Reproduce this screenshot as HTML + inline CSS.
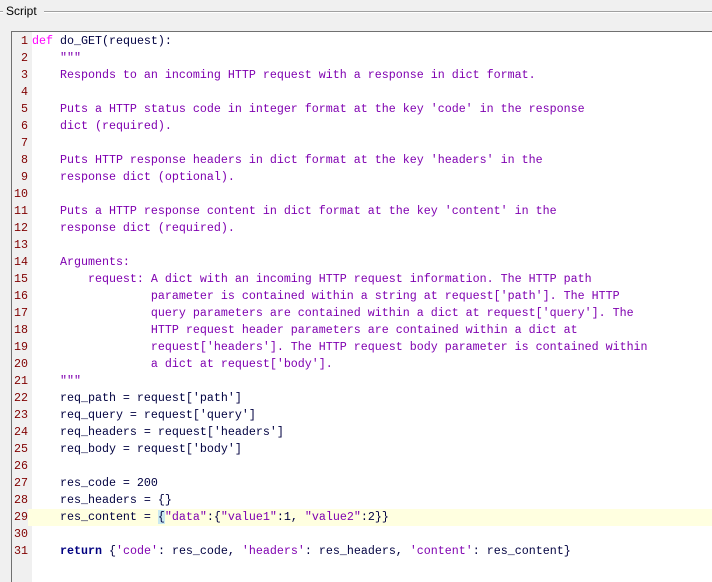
<!DOCTYPE html>
<html><head><style>
html,body{margin:0;width:712px;height:582px;overflow:hidden}
body{background:#f0f0f0;position:relative;font-family:"Liberation Sans",sans-serif}
.title{position:absolute;left:6px;top:4px;font-size:12px;color:#000}
.groove{position:absolute;left:44px;top:11px;width:668px;height:0;border-top:1px solid #a0a0a0;border-bottom:1px solid #fff}
.gl{position:absolute;left:0;top:11px;width:3px;border-top:1px solid #a0a0a0;border-bottom:1px solid #fff}
.ed{position:absolute;left:11px;top:31px;width:701px;height:551px;border-left:1px solid #707070;border-top:1px solid #707070;background:#fff;overflow:hidden}
.gut{position:absolute;left:0;top:0;width:20px;height:100%;background:#f0f0f0}
pre{margin:0;position:absolute;top:1px;left:0;font-family:"Liberation Mono",monospace;font-size:11.67px;line-height:17px;color:#000040}
.row{height:17px;white-space:pre;position:relative}
.n{display:inline-block;width:16px;text-align:right;color:#800000;margin-right:4px}
.d{color:#7f00b0}.k{color:#ff00ff}.r{color:#000080;font-weight:bold}.s{color:#7f00b0}
.hl{background:#ffffe0;width:701px}
.hl .n{background:#f0f0f0}
.br{background:#c8e8f0}
</style></head><body>
<div class="gl"></div>
<div class="title">Script</div>
<div class="groove"></div>
<div class="ed"><div class="gut"></div>
<pre><div class="row"><span class="n">1</span><span class="k">def</span> do_GET(request):</div><div class="row"><span class="n">2</span><span class="d">    """</span></div><div class="row"><span class="n">3</span><span class="d">    Responds to an incoming HTTP request with a response in dict format.</span></div><div class="row"><span class="n">4</span></div><div class="row"><span class="n">5</span><span class="d">    Puts a HTTP status code in integer format at the key 'code' in the response</span></div><div class="row"><span class="n">6</span><span class="d">    dict (required).</span></div><div class="row"><span class="n">7</span></div><div class="row"><span class="n">8</span><span class="d">    Puts HTTP response headers in dict format at the key 'headers' in the</span></div><div class="row"><span class="n">9</span><span class="d">    response dict (optional).</span></div><div class="row"><span class="n">10</span></div><div class="row"><span class="n">11</span><span class="d">    Puts a HTTP response content in dict format at the key 'content' in the</span></div><div class="row"><span class="n">12</span><span class="d">    response dict (required).</span></div><div class="row"><span class="n">13</span></div><div class="row"><span class="n">14</span><span class="d">    Arguments:</span></div><div class="row"><span class="n">15</span><span class="d">        request: A dict with an incoming HTTP request information. The HTTP path</span></div><div class="row"><span class="n">16</span><span class="d">                 parameter is contained within a string at request['path']. The HTTP</span></div><div class="row"><span class="n">17</span><span class="d">                 query parameters are contained within a dict at request['query']. The</span></div><div class="row"><span class="n">18</span><span class="d">                 HTTP request header parameters are contained within a dict at</span></div><div class="row"><span class="n">19</span><span class="d">                 request['headers']. The HTTP request body parameter is contained within</span></div><div class="row"><span class="n">20</span><span class="d">                 a dict at request['body'].</span></div><div class="row"><span class="n">21</span><span class="d">    """</span></div><div class="row"><span class="n">22</span>    req_path = request['path']</div><div class="row"><span class="n">23</span>    req_query = request['query']</div><div class="row"><span class="n">24</span>    req_headers = request['headers']</div><div class="row"><span class="n">25</span>    req_body = request['body']</div><div class="row"><span class="n">26</span></div><div class="row"><span class="n">27</span>    res_code = 200</div><div class="row"><span class="n">28</span>    res_headers = {}</div><div class="row hl"><span class="n">29</span>    res_content = <span class="br">{</span><span class="s">"data"</span>:{<span class="s">"value1"</span>:1, <span class="s">"value2"</span>:2}}</div><div class="row"><span class="n">30</span></div><div class="row"><span class="n">31</span>    <span class="r">return</span> {<span class="s">'code'</span>: res_code, <span class="s">'headers'</span>: res_headers, <span class="s">'content'</span>: res_content}</div></pre>
</div>
</body></html>
